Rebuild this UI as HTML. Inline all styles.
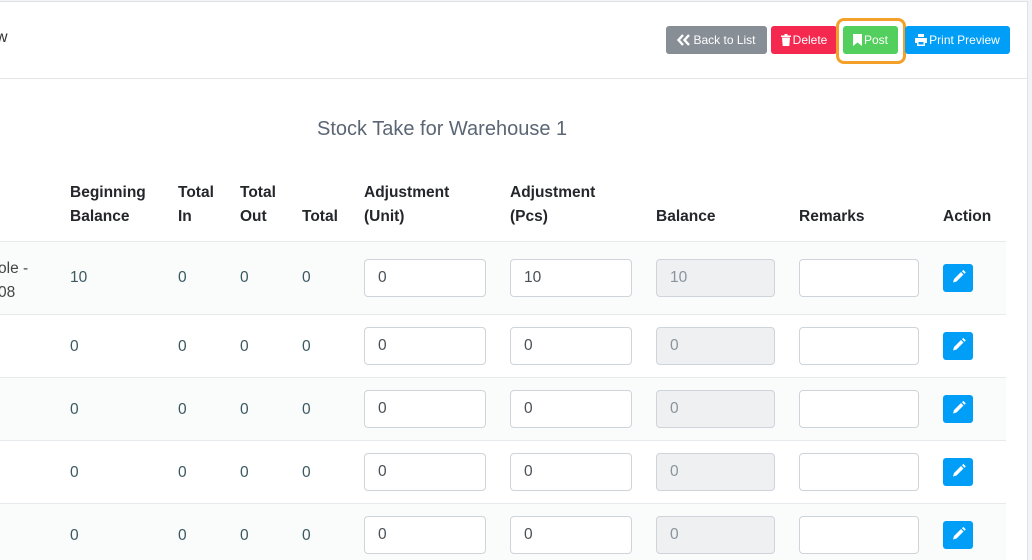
<!DOCTYPE html>
<html><head><style>
*{box-sizing:border-box;margin:0;padding:0}
html{width:1032px;height:560px;overflow:hidden}
body{width:1032px;height:560px;background:#f1f3f5;font-family:"Liberation Sans",sans-serif;position:relative;overflow:hidden}
.card{position:absolute;left:0;top:1px;width:1028px;height:559px;background:#fff;border-top:1px solid #dee2e6;border-right:1px solid #dee2e6}
.hdr{position:absolute;left:0;top:78px;width:1028px;height:1px;background:#e3e6e8}
.a{position:absolute;white-space:nowrap}
.btn{position:absolute;top:26px;height:28px;border-radius:3px;color:#fff;font-size:12px;line-height:28px;text-align:center;white-space:nowrap}
.btn svg{vertical-align:-2px;margin-right:2px}
.th{position:absolute;font-weight:bold;font-size:15.5px;color:#24262b;line-height:24px;top:181px}
.row{position:absolute;left:0;width:1006px;border-top:1px solid #e7eaec}
.td{position:absolute;font-size:15.5px;color:#3a5860}
.inp{position:absolute;height:38px;border:1px solid #ced4da;border-radius:4px;background:#fff;font-size:15.5px;color:#495057;line-height:36px;padding-left:13px}
.dis{background:#eef0f2;color:#8a949c}
.ed{position:absolute;width:30px;height:28px;background:#009ef7;border-radius:3px}
</style></head><body>
<div class="card"></div>
<div class="hdr"></div>
<div class="a" style="left:0;top:29px;font-size:16px;color:#333;width:10px;overflow:hidden"><span style="margin-left:-4px">w</span></div>
<div class="btn" style="left:666px;width:101px;background:#878e95"><svg width="14" height="12" viewBox="0 0 14 12"><path d="M6 1L1.5 6 6 11M12 1L7.5 6 12 11" stroke="#fff" stroke-width="2.4" fill="none"/></svg>Back to List</div>
<div class="btn" style="left:771px;width:66px;background:#f5284f"><svg width="10" height="12" viewBox="0 0 10 12"><path d="M0 1.5h10v1.5H0zM3.5 0h3v1.5h-3zM1 3.5h8l-.7 8.5H1.7z" fill="#fff"/></svg>Delete</div>
<div class="a" style="left:836px;top:18px;width:70px;height:46px;border:3px solid #f4a12a;border-radius:8px"></div>
<div class="btn" style="left:843px;width:55px;background:#53cf5d"><svg width="9" height="12" viewBox="0 0 9 12"><path d="M0 0h9v12L4.5 8.5 0 12z" fill="#fff"/></svg>Post</div>
<div class="btn" style="left:905px;width:105px;background:#009ef7"><svg width="12" height="12" viewBox="0 0 12 12"><path d="M3 0h6v3H3zM0 4h12v5h-2v3H2V9H0zM3.5 8v2.5h5V8z" fill="#fff" fill-rule="evenodd"/></svg>Print Preview</div>
<div class="a" style="left:317px;top:118px;font-size:20px;color:#5b6674">Stock Take for Warehouse 1</div>
<div class="th" style="left:70px">Beginning<br>Balance</div>
<div class="th" style="left:178px">Total<br>In</div>
<div class="th" style="left:240px">Total<br>Out</div>
<div class="th" style="left:302px;top:205px">Total</div>
<div class="th" style="left:364px">Adjustment<br>(Unit)</div>
<div class="th" style="left:510px">Adjustment<br>(Pcs)</div>
<div class="th" style="left:656px;top:205px">Balance</div>
<div class="th" style="left:799px;top:205px">Remarks</div>
<div class="th" style="left:943px;top:205px">Action</div>
<div class="row" style="top:241px;height:73px;background:#fafcfc"></div>
<div class="row" style="top:314px;height:63px"></div>
<div class="row" style="top:377px;height:63px;background:#fafcfc"></div>
<div class="row" style="top:440px;height:63px"></div>
<div class="row" style="top:503px;height:57px;background:#fafcfc"></div>
<div class="td" style="left:0;top:257px;line-height:24px;color:#444;width:30px;overflow:hidden"><div style="margin-left:-2px">ole -<br>08</div></div>

<div class="td" style="left:70px;top:269px">10</div><div class="td" style="left:178px;top:269px">0</div><div class="td" style="left:240px;top:269px">0</div><div class="td" style="left:302px;top:269px">0</div>
<div class="inp" style="left:364px;top:259px;width:122px">0</div><div class="inp" style="left:510px;top:259px;width:122px">10</div><div class="inp dis" style="left:656px;top:259px;width:119px">10</div><div class="inp" style="left:799px;top:259px;width:120px"></div>

<div class="td" style="left:70px;top:338px">0</div><div class="td" style="left:178px;top:338px">0</div><div class="td" style="left:240px;top:338px">0</div><div class="td" style="left:302px;top:338px">0</div>
<div class="inp" style="left:364px;top:327px;width:122px">0</div><div class="inp" style="left:510px;top:327px;width:122px">0</div><div class="inp dis" style="left:656px;top:327px;width:119px">0</div><div class="inp" style="left:799px;top:327px;width:120px"></div>

<div class="td" style="left:70px;top:401px">0</div><div class="td" style="left:178px;top:401px">0</div><div class="td" style="left:240px;top:401px">0</div><div class="td" style="left:302px;top:401px">0</div>
<div class="inp" style="left:364px;top:390px;width:122px">0</div><div class="inp" style="left:510px;top:390px;width:122px">0</div><div class="inp dis" style="left:656px;top:390px;width:119px">0</div><div class="inp" style="left:799px;top:390px;width:120px"></div>

<div class="td" style="left:70px;top:464px">0</div><div class="td" style="left:178px;top:464px">0</div><div class="td" style="left:240px;top:464px">0</div><div class="td" style="left:302px;top:464px">0</div>
<div class="inp" style="left:364px;top:453px;width:122px">0</div><div class="inp" style="left:510px;top:453px;width:122px">0</div><div class="inp dis" style="left:656px;top:453px;width:119px">0</div><div class="inp" style="left:799px;top:453px;width:120px"></div>

<div class="td" style="left:70px;top:527px">0</div><div class="td" style="left:178px;top:527px">0</div><div class="td" style="left:240px;top:527px">0</div><div class="td" style="left:302px;top:527px">0</div>
<div class="inp" style="left:364px;top:516px;width:122px">0</div><div class="inp" style="left:510px;top:516px;width:122px">0</div><div class="inp dis" style="left:656px;top:516px;width:119px">0</div><div class="inp" style="left:799px;top:516px;width:120px"></div>

<svg width="0" height="0" style="position:absolute"><symbol id="p" viewBox="0 0 30 28"><path d="M10 18.5l1-3.5 7-7 2.5 2.5-7 7z M19 7.2l1.3-1.3 2.5 2.5-1.3 1.3z" fill="#fff"/></symbol></svg>
<svg class="ed" style="left:943px;top:264px"><use href="#p"/></svg>
<svg class="ed" style="left:943px;top:332px"><use href="#p"/></svg>
<svg class="ed" style="left:943px;top:395px"><use href="#p"/></svg>
<svg class="ed" style="left:943px;top:458px"><use href="#p"/></svg>
<svg class="ed" style="left:943px;top:521px"><use href="#p"/></svg>
</body></html>
